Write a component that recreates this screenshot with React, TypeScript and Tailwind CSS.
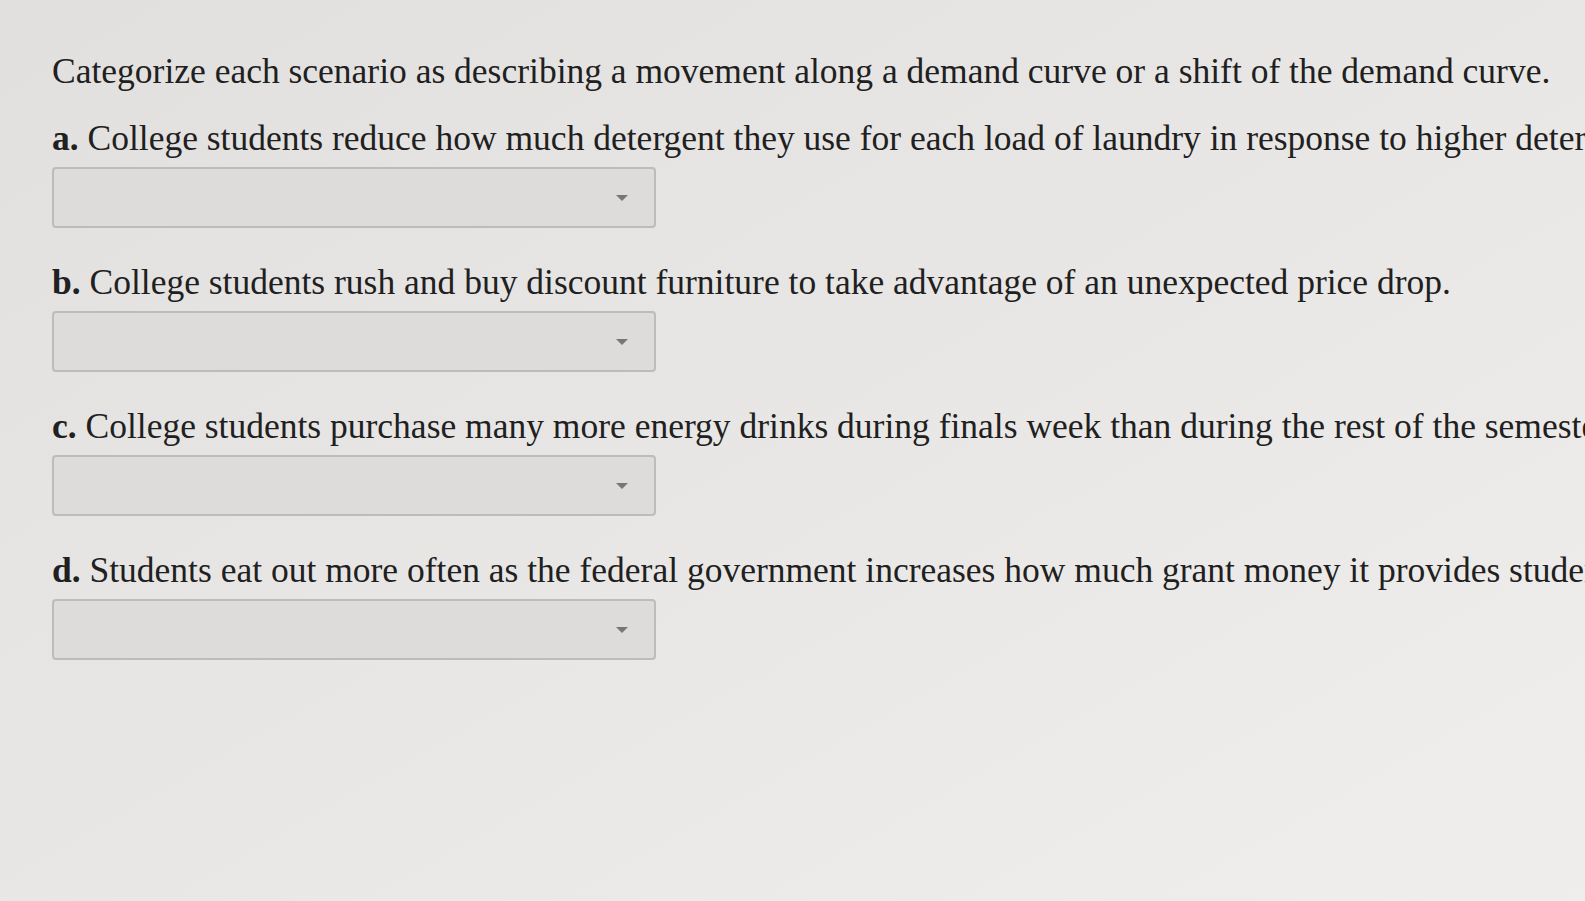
const questions = [
  {
    label: "a.",
    text: "College students reduce how much detergent they use for each load of laundry in response to higher detergent prices."
  },
  {
    label: "b.",
    text: "College students rush and buy discount furniture to take advantage of an unexpected price drop."
  },
  {
    label: "c.",
    text: "College students purchase many more energy drinks during finals week than during the rest of the semester."
  },
  {
    label: "d.",
    text: "Students eat out more often as the federal government increases how much grant money it provides students."
  }
];

function Dropdown() {
  return (
    <div className="flex h-[61px] w-[604px] items-center justify-end rounded-[4px] border-2 border-[#bdbcba] bg-[#dddcda] pr-[26px]">
      <span className="h-0 w-0 border-x-[6px] border-t-[6px] border-x-transparent border-t-[#767676]" />
    </div>
  );
}

export default function App() {
  return (
    <main
      className="h-[901px] w-[1585px] overflow-hidden whitespace-nowrap bg-gradient-to-br from-[#e1e0de] via-[#e8e7e5] to-[#efeeec] pl-[52px] pt-[50px] text-[#202020]"
      style={{ fontFamily: '"Liberation Serif", "Times New Roman", serif' }}
    >
      <p className="text-[35.5px] leading-[42px]">
        Categorize each scenario as describing a movement along a demand curve or a shift of the demand curve.
      </p>
      <div className="mt-[25px] flex flex-col gap-[33px]">
        {questions.map((q) => (
          <div key={q.label} className="flex flex-col gap-[8px]">
            <p className="text-[35.5px] leading-[42px]">
              <span className="font-bold">{q.label}</span> {q.text}
            </p>
            <Dropdown />
          </div>
        ))}
      </div>
    </main>
  );
}
